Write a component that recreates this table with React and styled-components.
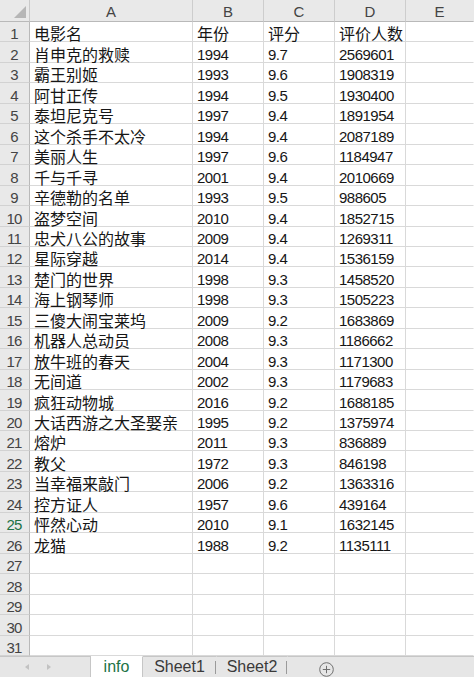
import React from "react";
import styled, { createGlobalStyle } from "styled-components";

const Global = createGlobalStyle`
  html, body { margin: 0; padding: 0; background: #fff; overflow: hidden; }
  * { box-sizing: border-box; }
`;

const rows = [
  ["电影名", "年份", "评分", "评价人数"],
  ["肖申克的救赎", "1994", "9.7", "2569601"],
  ["霸王别姬", "1993", "9.6", "1908319"],
  ["阿甘正传", "1994", "9.5", "1930400"],
  ["泰坦尼克号", "1997", "9.4", "1891954"],
  ["这个杀手不太冷", "1994", "9.4", "2087189"],
  ["美丽人生", "1997", "9.6", "1184947"],
  ["千与千寻", "2001", "9.4", "2010669"],
  ["辛德勒的名单", "1993", "9.5", "988605"],
  ["盗梦空间", "2010", "9.4", "1852715"],
  ["忠犬八公的故事", "2009", "9.4", "1269311"],
  ["星际穿越", "2014", "9.4", "1536159"],
  ["楚门的世界", "1998", "9.3", "1458520"],
  ["海上钢琴师", "1998", "9.3", "1505223"],
  ["三傻大闹宝莱坞", "2009", "9.2", "1683869"],
  ["机器人总动员", "2008", "9.3", "1186662"],
  ["放牛班的春天", "2004", "9.3", "1171300"],
  ["无间道", "2002", "9.3", "1179683"],
  ["疯狂动物城", "2016", "9.2", "1688185"],
  ["大话西游之大圣娶亲", "1995", "9.2", "1375974"],
  ["熔炉", "2011", "9.3", "836889"],
  ["教父", "1972", "9.3", "846198"],
  ["当幸福来敲门", "2006", "9.2", "1363316"],
  ["控方证人", "1957", "9.6", "439164"],
  ["怦然心动", "2010", "9.1", "1632145"],
  ["龙猫", "1988", "9.2", "1135111"],
];

const TOTAL_ROWS = 31;
const COLS = ["A", "B", "C", "D", "E"];

const Page = styled.div`
  width: 474px;
  height: 677px;
  display: flex;
  flex-direction: column;
  overflow: hidden;
  font-family: "Liberation Sans", "Noto Sans CJK SC", sans-serif;
`;

const Sheet = styled.div`
  flex: 1;
  display: grid;
  grid-template-columns: 30px 163px 71px 71px 71px 1fr;
  grid-template-rows: 22px repeat(${TOTAL_ROWS}, 1fr);
  min-height: 0;
`;

const Corner = styled.div`
  position: relative;
  background: #e9e9e9;
  border-right: 1px solid #c9c9c9;
  border-bottom: 1px solid #b9b9b9;
  &::after {
    content: "";
    position: absolute;
    right: 3px;
    bottom: 3px;
    width: 0;
    height: 0;
    border-left: 12px solid transparent;
    border-bottom: 12px solid #b6b6b6;
  }
`;

const ColHead = styled.div`
  background: #e9e9e9;
  border-right: 1px solid ${(p) => (p.$last ? "transparent" : "#cdcdcd")};
  border-bottom: 1px solid #b9b9b9;
  color: #444;
  font-size: 15px;
  line-height: 1;
  display: flex;
  align-items: center;
  justify-content: center;
  padding-top: 1px;
`;

const RowHead = styled.div`
  background: #e9e9e9;
  border-right: 1px solid #b9b9b9;
  border-bottom: 1px solid #d2d2d2;
  color: ${(p) => (p.$active ? "#217346" : "#444")};
  font-size: 15px;
  letter-spacing: -0.8px;
  line-height: 13px;
  display: flex;
  align-items: flex-end;
  justify-content: center;
  padding-bottom: 1px;
  padding-right: 1px;
`;

const Cell = styled.div`
  border-right: 1px solid ${(p) => (p.$last ? "transparent" : "#d9d9d9")};
  border-bottom: 1px solid #d9d9d9;
  display: flex;
  align-items: flex-end;
  padding: 0 0 0 4px;
  white-space: nowrap;
  color: #161616;
  font-family: ${(p) =>
    p.$cjk
      ? '"Noto Sans CJK SC", "Liberation Sans", sans-serif'
      : '"Liberation Sans", "Noto Sans CJK SC", sans-serif'};
  font-size: ${(p) => (p.$cjk ? "16px" : "15px")};
  letter-spacing: ${(p) => (p.$cjk ? "0" : "-0.5px")};
  line-height: ${(p) => (p.$cjk ? "16px" : "13px")};
  padding-bottom: ${(p) => (p.$cjk ? "0" : "1px")};
`;

const TabBar = styled.div`
  height: 21px;
  flex: none;
  display: flex;
  background: #e6e6e6;
  font-family: "Liberation Sans", sans-serif;
`;

const Nav = styled.div`
  width: 91px;
  flex: none;
  border-top: 1px solid #c6c6c6;
  border-right: 1px solid #c6c6c6;
  display: flex;
  align-items: center;
  gap: 18px;
  padding-left: 25px;
`;

const Arrow = styled.span`
  width: 0;
  height: 0;
  border-top: 3.5px solid transparent;
  border-bottom: 3.5px solid transparent;
  ${(p) =>
    p.$dir === "left"
      ? "border-right: 4px solid #c2c2c2;"
      : "border-left: 4px solid #c2c2c2;"}
`;

const Tab = styled.div`
  width: ${(p) => p.$w}px;
  flex: none;
  display: flex;
  align-items: center;
  justify-content: center;
  font-size: 16px;
  line-height: 1;
  padding-bottom: 1px;
  background: ${(p) => (p.$active ? "#fff" : "transparent")};
  color: ${(p) => (p.$active ? "#217346" : "#3a3a3a")};
  border-top: 1px solid ${(p) => (p.$active ? "#fff" : "#c6c6c6")};
  border-right: 1px solid ${(p) => (p.$active ? "#c6c6c6" : "transparent")};
  position: relative;
  ${(p) =>
    p.$sep
      ? `&::after {
    content: "";
    position: absolute;
    right: 0;
    top: 4px;
    bottom: 3px;
    width: 1px;
    background: #9a9a9a;
  }`
      : ""}
`;

const Rest = styled.div`
  flex: 1;
  border-top: 1px solid #c6c6c6;
  display: flex;
  align-items: center;
  padding-left: 31px;
`;

const AddButton = styled.div`
  width: 15px;
  height: 15px;
  margin-top: 4px;
  display: flex;
  align-items: center;
  justify-content: center;
`;

function PlusCircle() {
  return (
    <svg width="15" height="15" viewBox="0 0 15 15">
      <circle cx="7.5" cy="7.5" r="6.8" fill="none" stroke="#707070" strokeWidth="1" />
      <line x1="7.5" y1="3.8" x2="7.5" y2="11.2" stroke="#707070" strokeWidth="1" />
      <line x1="3.8" y1="7.5" x2="11.2" y2="7.5" stroke="#707070" strokeWidth="1" />
    </svg>
  );
}

const isCjk = (s) => /[\u4e00-\u9fff]/.test(s);

export default function App() {
  const body = [];
  for (let r = 0; r < TOTAL_ROWS; r++) {
    const data = rows[r] || [];
    body.push(
      <React.Fragment key={r}>
        <RowHead $active={r === 24}>{r + 1}</RowHead>
        {COLS.map((c, i) => {
          const v = data[i] || "";
          return (
            <Cell key={c} $cjk={isCjk(v)} $last={i === COLS.length - 1}>
              {v}
            </Cell>
          );
        })}
      </React.Fragment>
    );
  }
  return (
    <>
      <Global />
      <Page>
        <Sheet>
          <Corner />
          {COLS.map((c, i) => (
            <ColHead key={c} $last={i === COLS.length - 1}>
              {c}
            </ColHead>
          ))}
          {body}
        </Sheet>
        <TabBar>
          <Nav>
            <Arrow $dir="left" />
            <Arrow $dir="right" />
          </Nav>
          <Tab $w={52} $active>
            info
          </Tab>
          <Tab $w={74} $sep>
            Sheet1
          </Tab>
          <Tab $w={71} $sep>
            Sheet2
          </Tab>
          <Rest>
            <AddButton>
              <PlusCircle />
            </AddButton>
          </Rest>
        </TabBar>
      </Page>
    </>
  );
}
